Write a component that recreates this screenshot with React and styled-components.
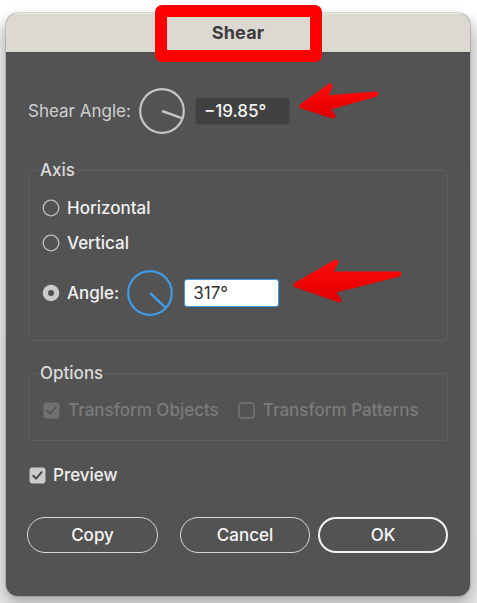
import React from "react";
import styled, { createGlobalStyle } from "styled-components";

const GlobalStyle = createGlobalStyle`
  html, body { margin: 0; padding: 0; background: #ffffff; }
  body { font-family: Inter, "Noto Sans", "Liberation Sans", sans-serif; }
  * { box-sizing: border-box; }
`;

const Stage = styled.div`
  position: relative;
  width: 477px;
  height: 603px;
  padding: 13px 7px 7px 6px;
  background: linear-gradient(to bottom, #ffffff 0px, #ffffff 14px, #e9e9e9 40px, #e4e4e4 100%);
  overflow: hidden;
`;

const Dialog = styled.div`
  width: 464px;
  height: 583px;
  border-radius: 12px;
  overflow: hidden;
  display: flex;
  flex-direction: column;
  background: #535353;
  box-shadow: 0 0 0 1px rgba(0, 0, 0, 0.12), 0 6px 14px rgba(0, 0, 0, 0.28);
`;

const TitleBar = styled.div`
  height: 40px;
  flex: none;
  display: flex;
  align-items: center;
  justify-content: center;
  background: #dcd9d2;
  border-bottom: 1px solid #4a4a4a;
  box-shadow: inset 0 1px 0 #ebe9e4;
  color: #3c3c3c;
  font-weight: 700;
  font-size: 18px;
  letter-spacing: 0.2px;
`;

const Body = styled.div`
  flex: 1;
  display: flex;
  flex-direction: column;
  padding: 35px 22px 0 22px;
`;

const Row = styled.div`
  display: flex;
  align-items: center;
  height: ${(p) => p.$h || 24}px;
  gap: ${(p) => p.$gap || 0}px;
  margin-left: ${(p) => p.$ml || 0}px;
`;

const Spacer = styled.span`
  flex: none;
  width: ${(p) => p.$w}px;
`;

const Label = styled.span`
  font-size: 17px;
  color: ${(p) => (p.$dim ? "#cfcfcf" : p.$disabled ? "#7b7b7b" : "#f0f0f0")};
  font-weight: ${(p) => (p.$dim ? 400 : 500)};
  white-space: nowrap;
`;

const NumberField = styled.div`
  width: 95px;
  height: 28px;
  display: flex;
  align-items: center;
  padding-left: 8px;
  border-radius: 3px;
  font-size: 17px;
  background: ${(p) => (p.$active ? "#ffffff" : "#414141")};
  color: ${(p) => (p.$active ? "#333333" : "#f4f4f4")};
  border: ${(p) => (p.$active ? "1.5px solid #3f9be8" : "1px solid #4c4c4c")};
  font-weight: ${(p) => (p.$active ? 400 : 500)};
`;

const Group = styled.fieldset`
  margin: ${(p) => p.$mt || 0}px 0 0 0;
  padding: ${(p) => p.$pt || 0}px 14px ${(p) => p.$pb || 0}px 14px;
  border: 1px solid #5f5f5f;
  border-radius: 4px;
  display: flex;
  flex-direction: column;
  min-width: 0;
`;

const Legend = styled.legend`
  padding: 0 2px;
  margin-left: -5px;
  line-height: 20px;
  font-size: 17px;
  font-weight: 500;
  color: #dadada;
`;

const RadioGap = styled.div`
  height: ${(p) => p.$h}px;
`;

const Buttons = styled.div`
  display: flex;
  margin-top: 32px;
`;

const Button = styled.div`
  width: ${(p) => p.$w}px;
  margin-left: ${(p) => p.$ml || 0}px;
  height: 36px;
  border-radius: 18px;
  border: ${(p) => (p.$default ? "2.5px solid #f2f2f2" : "1.3px solid #dadada")};
  display: flex;
  align-items: center;
  justify-content: center;
  color: #f6f6f6;
  font-size: 17px;
  font-weight: 500;
`;

const Highlight = styled.div`
  position: absolute;
  left: 155px;
  top: 5px;
  width: 167px;
  height: 57px;
  border: 12px solid #ff0000;
  border-radius: 7px;
  pointer-events: none;
`;

const ArrowSvg = styled.svg`
  position: absolute;
  left: 0;
  top: 0;
  pointer-events: none;
`;

const Radio = ({ checked }) => (
  <svg width="18" height="18" viewBox="0 0 18 18">
    {checked ? (
      <>
        <circle cx="9" cy="9" r="8.3" fill="#cacaca" />
        <circle cx="9" cy="9" r="3" fill="#4e4e4e" />
      </>
    ) : (
      <circle cx="9" cy="9" r="7.8" fill="none" stroke="#bdbdbd" strokeWidth="1.3" />
    )}
  </svg>
);

const Check = ({ checked, disabled }) => {
  const fill = disabled ? "#717171" : "#cbcbcb";
  const mark = disabled ? "#565656" : "#4a4a4a";
  return (
    <svg width="17" height="17" viewBox="0 0 17 17">
      {checked ? (
        <>
          <rect x="0.5" y="0.5" width="16" height="16" rx="3" fill={fill} />
          <path d="M4.3 8.8 L7.1 11.6 L12.6 5.2" fill="none" stroke={mark} strokeWidth="2" strokeLinecap="round" strokeLinejoin="round" />
        </>
      ) : (
        <rect x="1" y="1" width="15" height="15" rx="3" fill="none" stroke="#787878" strokeWidth="1.3" />
      )}
    </svg>
  );
};

const Dial = ({ angle, color }) => {
  const rad = (angle * Math.PI) / 180;
  const x2 = 23 + Math.cos(rad) * 21;
  const y2 = 23 - Math.sin(rad) * 21;
  return (
    <svg width="46" height="46" viewBox="0 0 46 46">
      <circle cx="23" cy="23" r="21.8" fill="none" stroke={color} strokeWidth="2.2" />
      <line x1="23" y1="23" x2={x2} y2={y2} stroke={color} strokeWidth="2.4" />
    </svg>
  );
};

export default function App() {
  return (
    <>
      <GlobalStyle />
      <Stage>
        <Dialog>
          <TitleBar>Shear</TitleBar>
          <Body>
            <Row $h={46}>
              <Label $dim>Shear Angle:</Label>
              <Spacer $w={8} />
              <Dial angle={-19.85} color="#c6c6c6" />
              <Spacer $w={10} />
              <NumberField>−19.85°</NumberField>
            </Row>

            <Group $mt={26} $pt={16} $pb={24}>
              <Legend>Axis</Legend>
              <Row $gap={7} $ml={-1}>
                <Radio />
                <Label>Horizontal</Label>
              </Row>
              <RadioGap $h={11} />
              <Row $gap={7} $ml={-1}>
                <Radio />
                <Label>Vertical</Label>
              </Row>
              <RadioGap $h={15} />
              <Row $h={46} $ml={-1}>
                <Radio checked />
                <Spacer $w={7} />
                <Label>Angle:</Label>
                <Spacer $w={8} />
                <Dial angle={317} color="#3f9be8" />
                <Spacer $w={11} />
                <NumberField $active>317°</NumberField>
              </Row>
            </Group>

            <Group $mt={22} $pt={15} $pb={18}>
              <Legend>Options</Legend>
              <Row>
                <Check checked disabled />
                <Spacer $w={8} />
                <Label $disabled>Transform Objects</Label>
                <Spacer $w={19} />
                <Check disabled />
                <Spacer $w={8} />
                <Label $disabled>Transform Patterns</Label>
              </Row>
            </Group>

            <Row style={{ marginTop: 24 }} $h={20}>
              <Spacer $w={1} />
              <Check checked />
              <Spacer $w={7} />
              <Label>Preview</Label>
            </Row>

            <Buttons>
              <Button $w={131} $ml={-1}>Copy</Button>
              <Button $w={130} $ml={22}>Cancel</Button>
              <Button $w={130} $ml={8} $default>OK</Button>
            </Buttons>
          </Body>
        </Dialog>

        <Highlight />
        <ArrowSvg width="477" height="603" viewBox="0 0 477 603">
          <defs>
            <linearGradient id="redg" x1="0" y1="0" x2="0" y2="1">
              <stop offset="0" stopColor="#ff0a0a" />
              <stop offset="1" stopColor="#e00000" />
            </linearGradient>
          </defs>
          <path
            d="M302 106 L330 86 L325 98 L376 94 L327 108 L333 116 Z"
            fill="url(#redg)"
            stroke="url(#redg)"
            strokeWidth="5"
            strokeLinejoin="round"
          />
          <path
            d="M296 285 L336 262 L330 274 L399 274 L332 291 L339 300 Z"
            fill="url(#redg)"
            stroke="url(#redg)"
            strokeWidth="5"
            strokeLinejoin="round"
          />
        </ArrowSvg>
      </Stage>
    </>
  );
}
